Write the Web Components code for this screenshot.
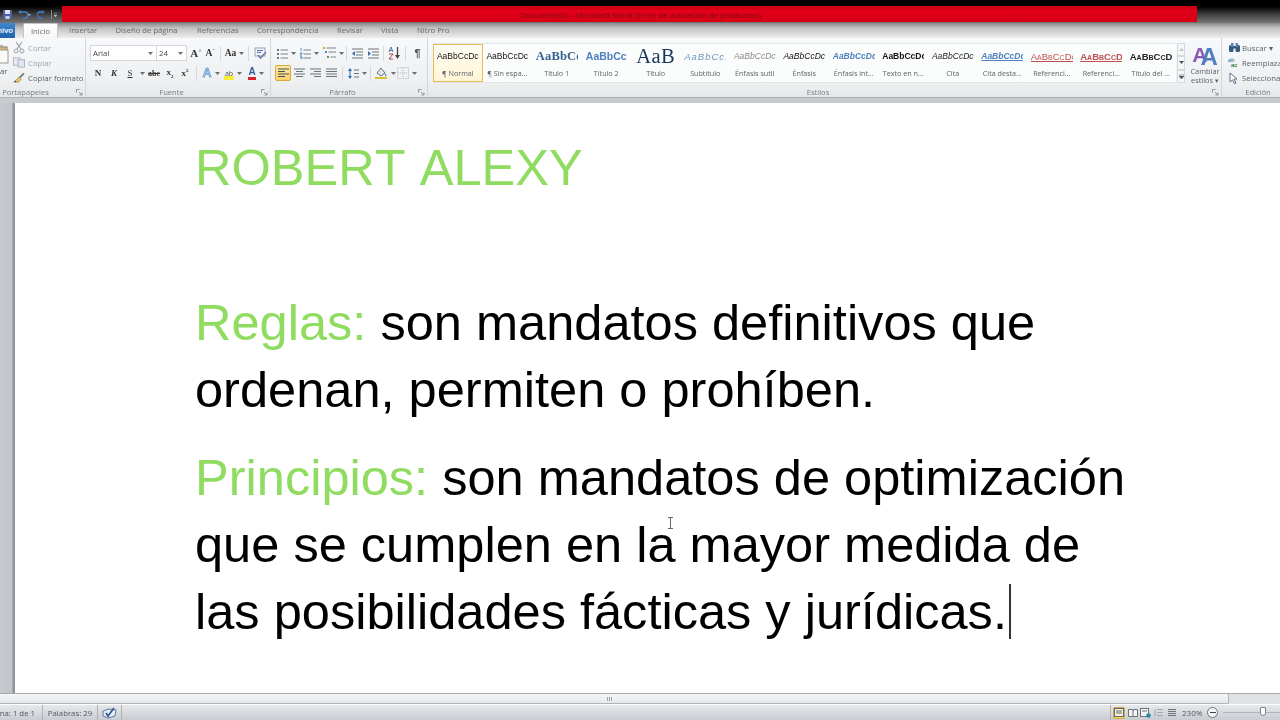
<!DOCTYPE html>
<html lang="es"><head><meta charset="utf-8"><title>Documento2 - Microsoft Word</title>
<style>
html,body{margin:0;height:720px;overflow:hidden;background:#fff}
body{font-family:"Open Sans","Liberation Sans",sans-serif}
word-app{display:flex;flex-direction:column;width:1280px;height:720px;overflow:hidden}
</style></head><body>
<word-app>
  <word-titlebar>Documento2 - Microsoft Word (Error de activación de productos)</word-titlebar>
  <word-tabs></word-tabs>
  <word-ribbon></word-ribbon>
  <word-doc>
    <doc-para gap="88">
      <doc-term>ROBERT ALEXY</doc-term>
    </doc-para>
    <doc-para gap="21"><doc-term>Reglas:</doc-term> son mandatos definitivos que<br>ordenan, permiten o prohíben.</doc-para>
    <doc-para gap="0"><doc-term>Principios:</doc-term> son mandatos de optimización<br>que se cumplen en la mayor medida de<br>las posibilidades fácticas y jurídicas.<doc-caret></doc-caret></doc-para>
  </word-doc>
  <word-hscroll></word-hscroll>
  <word-status></word-status>
</word-app>
<script>
const S=(w,h,b)=>`<svg xmlns="http://www.w3.org/2000/svg" width="${w}" height="${h}" viewBox="0 0 ${w} ${h}" fill="none">${b}</svg>`;
const lines=(ys,x1,x2,c='#5f6770')=>ys.map(y=>`<path d="M${x1} ${y}H${x2}" stroke="${c}"/>`).join('');
const ICONS={
 arrow:S(5,3,'<path d="M0 0h5L2.500 3z" fill="#6a7077"/>'),
 cut:S(12,13,'<path d="M3 1l5 7M9 1L4 8" stroke="#9ca2a8" stroke-width="1.200"/><circle cx="3" cy="10" r="2" stroke="#9ca2a8"/><circle cx="9" cy="10" r="2" stroke="#9ca2a8"/>'),
 copy:S(13,11,'<rect x=".5" y=".5" width="7" height="8" fill="#e8eaed" stroke="#aeb4ba"/><rect x="5.500" y="2.500" width="7" height="8" fill="#dfe8f2" stroke="#a8b4c0"/>'),
 brush:S(14,13,'<path d="M7 6l5-5 1.500 1.500-5 5z" fill="#777"/><path d="M2 11l5-5 2.500 2.500-3 3.500H3z" fill="#e8c860" stroke="#86713a" stroke-width=".6"/><path d="M0 12l3-2 1 2z" fill="#555"/>'),
 paste:S(9,20,'<rect x="-6" y="3" width="13" height="15" fill="#d9b877" stroke="#9c7d45"/><rect x="-3" y="6" width="11" height="13" fill="#fbfbf6" stroke="#999"/><rect x="-3" y="1" width="6" height="3" fill="#aaa"/>'),
 spell:S(13,13,'<rect x="1" y="1" width="10" height="8" fill="#f3f5f8" stroke="#9aa3ad"/><path d="M3 3.500h6M3 5.500h4" stroke="#4a76b5"/><path d="M4 8l2.500 3L12 5" stroke="#6a7fb0" stroke-width="1.500"/>'),
 bullets:S(11,11,'<rect x="0" y="1" width="2" height="2" fill="#6b7780"/><rect x="0" y="5" width="2" height="2" fill="#6b7780"/><rect x="0" y="9" width="2" height="2" fill="#6b7780"/>'+lines([2,6,10],3.5,11,'#7a838c')),
 numbers:S(11,11,'<path d="M1 0v3M0 5h2v1H0v2h2M0 9h2v2H0" stroke="#3d79bb" stroke-width=".8"/>'+lines([2,6,10],3.5,11,'#7a838c')),
 multi:S(13,12,'<rect x="0" y="0" width="2" height="2" fill="#e0a030"/><rect x="2" y="4" width="2" height="2" fill="#4a86c5"/><rect x="4" y="9" width="2" height="2" fill="#5a9a50"/><path d="M3.500 1H13M5.500 5H13M7.500 10H13" stroke="#7a838c"/>'),
 dedent:S(12,11,lines([1,10],1,12,'#6b737b')+lines([4,7],5,12,'#6b737b')+'<path d="M4 3v5L1 5.500z" fill="#3d6fae"/>'),
 indent:S(12,11,lines([1,10],1,12,'#6b737b')+lines([4,7],5,12,'#6b737b')+'<path d="M1 3v5l3-2.500z" fill="#3d6fae"/>'),
 sort:S(13,14,'<path d="M9.500 1v10" stroke="#444" stroke-width="1.300"/><path d="M7 9l2.500 4L12 9z" fill="#444"/><path d="M1 6l2-5 2 5M1.500 4.500h3" stroke="#3d6fae" stroke-width=".9"/><path d="M1 8h4l-4 5h4" stroke="#b03030" stroke-width=".9"/>'),
 aleft:S(13,10,'<path d="M1 1h11M1 3.500h7M1 6h11M1 8.500h7" stroke="#4b4f55"/>'),
 acenter:S(13,10,'<path d="M1 1h11M3 3.500h7M1 6h11M3 8.500h7" stroke="#6b737b"/>'),
 aright:S(13,10,'<path d="M1 1h11M5 3.500h7M1 6h11M5 8.500h7" stroke="#6b737b"/>'),
 ajust:S(13,10,'<path d="M1 1h11M1 3.500h11M1 6h11M1 8.500h11" stroke="#6b737b"/>'),
 spacing:S(12,13,'<path d="M3 3v7" stroke="#2f6cb3"/><path d="M1 4l2-3 2 3zM1 9l2 3 2-3z" fill="#2f6cb3"/><path d="M7 3h5M7 6.500h5M7 10h5" stroke="#6b737b"/>'),
 shade:S(14,14,'<path d="M3 7l4-5 4 5-4 3z" fill="#dfe6ee" stroke="#6a7480"/><path d="M11 7l1.500 2.500-1.500 1z" fill="#3d79bb"/><path d="M1 12h12" stroke="#d9c030" stroke-width="2"/>'),
 borders:S(12,12,'<rect x=".5" y=".5" width="11" height="11" stroke="#b5bbc2" stroke-dasharray="1 1"/><path d="M6 1v10M1 6h10" stroke="#b5bbc2" stroke-dasharray="1 1"/>'),
 launcher:S(7,7,'<path d="M.5 .5h3M.5 .5v3" stroke="#8d949b"/><path d="M3 3l3 3M6 3.500V6H3.500" stroke="#8d949b"/>'),
 find:S(13,11,'<rect x="1" y="3" width="4.500" height="7" rx="1.500" fill="#36597f"/><rect x="7.500" y="3" width="4.500" height="7" rx="1.500" fill="#36597f"/><rect x="3" y="1" width="2.500" height="4" fill="#5f86ad"/><rect x="7.500" y="1" width="2.500" height="4" fill="#5f86ad"/><rect x="5" y="4" width="3" height="2.500" fill="#36597f"/>'),
 cursor:S(11,12,'<path d="M2 1l7 6H6l2 4-1.500.8-2-4L2 10z" fill="#fff" stroke="#5c6f88"/>'),
 proof:S(16,12,'<path d="M1 4l6-2 7 1-1 6-7 2-5-2z" fill="#e7edf6" stroke="#5f76a5"/><path d="M4 6l2 3 6-8" stroke="#34558f" stroke-width="1.700"/>'),
 vprint:S(10,9,'<rect x=".5" y=".5" width="9" height="8" fill="#f6f2dc" stroke="#5e666e"/><path d="M2 3h6M2 5h6" stroke="#5e666e"/>'),
 vread:S(10,9,'<path d="M.5 1.500h4l.5 1 .5-1h4v7h-9z" stroke="#6b737b" fill="#f1f3f6"/><path d="M5 2v6" stroke="#6b737b"/>'),
 vweb:S(11,10,'<rect x=".5" y=".5" width="8" height="8" fill="#f1f3f6" stroke="#6b737b"/><path d="M2 3h5" stroke="#6b737b"/><circle cx="8.500" cy="7.500" r="2.200" fill="#3086a8"/>'),
 vout:S(10,9,'<path d="M3 1.500h6M3 4.500h6M3 7.500h6" stroke="#a0a6ad"/><path d="M1 1v7" stroke="#a0a6ad"/>'),
 vdraft:S(10,9,'<path d="M1 1.500h8M1 3.500h8M1 5.500h8M1 7.500h8" stroke="#6b737b"/>'),
 ibeam:S(7,12,'<path d="M1 .5h5M1 11.500h5M3.500 1v10" stroke="#666"/>')
};
class Base extends HTMLElement{
  html(s){(this.shadowRoot||this.attachShadow({mode:'open'})).innerHTML=s}
}
const def=(n,c)=>customElements.define(n,c);

def('tool-icon',class extends Base{connectedCallback(){this.html(`<style>:host{display:inline-flex;align-items:center;justify-content:center;line-height:0}</style>${ICONS[this.getAttribute('name')]||''}`)}});

def('tool-btn',class extends Base{connectedCallback(){
  const w=this.getAttribute('w')||16,act=this.hasAttribute('active');
  this.html(`<style>:host{display:inline-flex;align-items:center;justify-content:center;box-sizing:border-box;height:16px;width:${w}px;flex:none;gap:3px;${act?'background:linear-gradient(#fde9a8,#fbd268);border:1px solid #d9a93a;border-radius:2px;':''}}</style><slot></slot>`)}});

def('tool-sep',class extends Base{connectedCallback(){
  const w=this.getAttribute('w')||6;
  this.html(`<style>:host{display:block;flex:none;width:${w}px;height:15px;position:relative}i{display:block;width:1px;height:15px;margin:auto;background:#d5d8dc}</style><i></i>`)}});

def('ribbon-group',class extends Base{connectedCallback(){
  const w=this.getAttribute('w'),nl=this.hasAttribute('nolaunch');
  const pl=this.getAttribute('pl')||0,pr=this.getAttribute('pr')||0;
  this.html(`<style>
  :host{display:flex;flex-direction:column;flex:none;box-sizing:border-box;width:${w}px;height:59px;border-right:1px solid #d3d6da}
  .c{flex:1;min-height:0;overflow:hidden}
  .l{height:10px;box-sizing:border-box;padding:0 ${pr}px 0 ${pl}px;display:flex;align-items:center;justify-content:center;position:relative;font-size:7.600px;color:#777b81;line-height:10px;flex:none}
  tool-icon{position:absolute;right:2px;top:2px}
  </style><div class="c"><slot></slot></div><div class="l">${this.getAttribute('label')}${nl?'':'<tool-icon name="launcher"></tool-icon>'}</div>`)}});

def('style-tile',class extends Base{connectedCallback(){
  const act=this.hasAttribute('active');
  this.html(`<style>
  :host{display:flex;flex-direction:column;align-items:center;flex:none;box-sizing:border-box;width:49.500px;height:38px;overflow:hidden;${act?'border:1.500px solid #e8bd55;background:linear-gradient(#fffdf3,#fff6d8);':'border:1.500px solid transparent;'}}
  .p{height:23px;width:42px;overflow:hidden;white-space:nowrap;display:flex;align-items:center;justify-content:safe center;${this.getAttribute('pstyle')||''};line-height:23px}
  .n{font-size:7.200px;color:#5e6268;white-space:nowrap;line-height:10px}
  </style><div class="p">${this.getAttribute('preview')||'AaBbCcDc'}</div><div class="n">${this.getAttribute('name')}</div>`)}});

def('word-titlebar',class extends Base{connectedCallback(){
  this.html(`<style>
  :host{display:flex;flex:none;height:23px;box-sizing:border-box;padding:6px 83px 1px 0;background:linear-gradient(#000 0,#000 28%,#3e3e3e 62%,#777 100%);font-family:"Open Sans","Liberation Sans",sans-serif}
  .q{width:62px;flex:none;display:flex;align-items:center;gap:6px;padding-left:3px;box-sizing:border-box;height:17px;filter:blur(.4px)}
  .r{flex:1;background:linear-gradient(#c8000f,#e3001a 30%,#d80014);display:flex;align-items:center;justify-content:center;color:#7f0c12;font-size:8px;padding-left:21px;white-space:nowrap}
  </style><div class="q">
  <svg width="9" height="9" viewBox="0 0 9 9"><rect width="9" height="9" fill="#4c5fa8"/><rect x="2" width="5" height="4" fill="#dfe5f2"/><rect x="2.500" y="6" width="4" height="3" fill="#c8cfdd"/></svg>
  <svg width="13" height="9" viewBox="0 0 13 9" fill="none"><path d="M2 2h5a3 3 0 0 1 0 6H5" stroke="#4b7dc0" stroke-width="1.600"/><path d="M0 2l3-2v4z" fill="#4b7dc0"/><path d="M10 4h3l-1.500 2z" fill="#bbb"/></svg>
  <svg width="8" height="9" viewBox="0 0 8 9" fill="none"><path d="M6 2H3a2.500 2.500 0 0 0 0 6h2" stroke="#3f72b8" stroke-width="1.800"/><path d="M8 2L5 0v4z" fill="#3f72b8"/></svg>
  <svg width="6" height="9" viewBox="0 0 6 9"><path d="M.5 0v9" stroke="#8b8b8b"/><path d="M3 3h3M3 5h3l-1.500 2z" fill="#bbb" stroke="#bbb" stroke-width=".5"/></svg>
  </div><div class="r"><slot></slot></div>`)}});

def('word-tabs',class extends Base{connectedCallback(){
  const t=[['Insertar',69],['Diseño de página',115],['Referencias',197],['Correspondencia',257],['Revisar',337],['Vista',381],['Nitro Pro',417]];
  let gaps='',x=58;
  const widths=[28,63,41,60,24,17,31];
  t.forEach((a,i)=>{gaps+=`<span style="margin-left:${a[1]-x}px;width:${widths[i]}px">${a[0]}</span>`;x=a[1]+widths[i]});
  this.html(`<style>
  :host{display:flex;flex:none;height:15px;background:linear-gradient(#8a8a8a,#c4c4c4 35%,#eceded 100%);font-size:7.700px;color:#656b71;line-height:15px;position:relative;filter:blur(.3px)}
  .f{margin-left:-16px;width:31px;flex:none;box-sizing:border-box;background:linear-gradient(#3f86d0,#2160ae);color:#fff;text-align:right;padding-right:2px;overflow:hidden;font-weight:600;white-space:nowrap}
  .a{margin-left:8px;width:35px;flex:none;text-align:center;background:linear-gradient(#fff,#f6f7f8);border:1px solid #c3c7cc;border-bottom:none;box-sizing:border-box;height:16px;border-radius:2px 2px 0 0;position:relative;z-index:1;line-height:14px}
  span{display:inline-block;flex:none;text-align:center;white-space:nowrap}
  </style><div class="f">Archivo</div><div class="a">Inicio</div>${gaps}`)}});

const btn=(ic,w,arrow,attr='')=>`<tool-btn w="${w}" ${attr}><tool-icon name="${ic}"></tool-icon>${arrow?'<tool-icon name="arrow"></tool-icon>':''}</tool-btn>`;
const txt=(t,w,st,arrow)=>`<tool-btn w="${w}"><span style="${st}">${t}</span>${arrow?'<tool-icon name="arrow"></tool-icon>':''}</tool-btn>`;
const ser='font-family:Liberation Serif,serif;font-weight:700;color:#333;';

def('word-ribbon',class extends Base{connectedCallback(){
  const tiles=[
   ['¶ Normal','font:8.500px Liberation Sans,sans-serif;color:#111','AaBbCcDc','active'],
   ['¶ Sin espa...','font:8.500px Liberation Sans,sans-serif;color:#111'],
   ['Título 1','font:700 12.500px Liberation Serif,serif;color:#365f91;letter-spacing:.2px','AaBbCc'],
   ['Título 2','font:700 10.500px Liberation Sans,sans-serif;color:#4f81bd','AaBbCc'],
   ['Título','font:20.500px Liberation Serif,serif;color:#17365d;letter-spacing:.5px','AaB'],
   ['Subtítulo','font:italic 9.500px Liberation Sans,sans-serif;color:#6f94c4;letter-spacing:1px','AaBbCc.'],
   ['Énfasis sutil','font:italic 8.500px Liberation Sans,sans-serif;color:#8a8a8a'],
   ['Énfasis','font:italic 8.500px Liberation Sans,sans-serif;color:#111'],
   ['Énfasis int...','font:italic 700 8.500px Liberation Sans,sans-serif;color:#4f81bd'],
   ['Texto en n...','font:700 8.500px Liberation Sans,sans-serif;color:#111'],
   ['Cita','font:italic 8.500px Liberation Sans,sans-serif;color:#222'],
   ['Cita desta...','font:italic 700 8.500px Liberation Sans,sans-serif;color:#4f81bd;text-decoration:underline'],
   ['Referenci...','font:small-caps 9.500px Liberation Sans,sans-serif;color:#c0504d;text-decoration:underline','AaBbCcDc'],
   ['Referenci...','font:small-caps 700 9.500px Liberation Sans,sans-serif;color:#c0504d;text-decoration:underline','AaBbCcDe'],
   ['Título del ...','font:small-caps 700 9.500px Liberation Sans,sans-serif;color:#222','AaBbCcDc']
  ].map(t=>`<style-tile name="${t[0]}" pstyle="${t[1]}" ${t[2]?`preview="${t[2]}"`:''} ${t[3]||''}></style-tile>`).join('');
  this.html(`<style>
  :host{display:flex;flex:none;height:60px;box-sizing:border-box;background:linear-gradient(#f8f9fa,#eef0f2 70%,#e6e8ea);border-bottom:1px solid #aeb2b7;filter:blur(.4px);font-size:8px;color:#5e6268;overflow:hidden}
  .row{display:flex;align-items:center;height:20px}
  .combo{box-sizing:border-box;height:16px;background:#fff;border:1px solid #d4d8dc;display:flex;align-items:center;justify-content:space-between;padding:0 3px 0 2px;font-size:7.800px;color:#444;flex:none}
  .clip{display:flex;height:47px}
  .cl{display:flex;align-items:center;gap:3px;height:15px;white-space:nowrap;font-size:7.800px}
  .dim{color:#a0a4a9}
  .paste{width:13px;flex:none;padding-top:6px;font-size:7.800px;color:#555;line-height:10px}
  .gal{display:flex;align-items:flex-start;margin:5px 0 0 5px}
  .tiles{display:flex;width:743px;height:40px;background:#fbfcfc;border:1px solid #e3e5e8;border-width:1px 0;box-sizing:border-box;overflow:hidden;flex:none}
  .sb{display:flex;flex-direction:column;width:8px;flex:none;height:40px;margin-left:1px}
  .sb i{flex:1;border:1px solid #d5d8dc;display:flex;align-items:center;justify-content:center;background:#f5f6f7;box-sizing:border-box}
  .ch{width:38px;flex:none;margin-left:1px;display:flex;flex-direction:column;align-items:center;font-size:7.400px;line-height:9px;text-align:center;color:#5e6268;white-space:nowrap}
  .aa{height:24px;font:700 24px/24px "Liberation Sans",sans-serif;white-space:nowrap;overflow:hidden}
  .aa b{letter-spacing:-7px;color:#8a5bb0;font-size:21px;vertical-align:3px}
  .aa i{font-style:normal;color:#4f7fc0}
  .ed div{display:flex;align-items:center;gap:0;height:15px;white-space:nowrap;font-size:7.800px;padding-left:6px}
  .ed tool-icon,.rp{width:14px;flex:none;justify-content:flex-start}
  .rp{display:block;font:6px/5px "Liberation Sans",sans-serif;color:#2f6d9e}
  .rp b{color:#2d7f3a;display:block;padding-left:3px}
  </style>
  <ribbon-group w="86" label="Portapapeles" pr="34">
   <div class="clip">
    <div class="paste"><tool-icon name="paste"></tool-icon><br>ar</div>
    <div style="padding-top:2px">
     <div class="cl dim"><tool-icon name="cut" style="width:12px"></tool-icon>Cortar</div>
     <div class="cl dim"><tool-icon name="copy" style="width:12px"></tool-icon>Copiar</div>
     <div class="cl"><tool-icon name="brush" style="width:12px"></tool-icon>Copiar formato</div>
    </div>
   </div>
  </ribbon-group>
  <ribbon-group w="185" label="Fuente" pr="13">
   <div style="padding:5px 0 0 4px">
    <div class="row">
     <div class="combo" style="width:67px"><span>Arial</span><tool-icon name="arrow"></tool-icon></div>
     <div class="combo" style="width:30px;border-left:none"><span>24</span><tool-icon name="arrow"></tool-icon></div>
     <span style="width:2px"></span>
     ${txt('A<span style="font-size:6px;color:#3470b5;vertical-align:4px">^</span>',14,ser+'font-size:11px')}
     ${txt('A<span style="font-size:6px;color:#3470b5;vertical-align:3px">ˇ</span>',14,ser+'font-size:9.500px')}
     <tool-sep w="6"></tool-sep>
     ${txt('Aa',23,ser+'font-size:9.500px',1)}
     <tool-sep w="4"></tool-sep>
     ${btn('spell',20)}
    </div>
    <div class="row">
     ${txt('N',16,ser+'font-size:9px')}
     ${txt('K',16,ser+'font-size:9px;font-style:italic')}
     ${txt('S',16,ser+'font-size:9px;text-decoration:underline;font-weight:400')}
     <tool-btn w="8"><tool-icon name="arrow"></tool-icon></tool-btn>
     ${txt('abc',16,ser+'font-size:8px;text-decoration:line-through')}
     ${txt('x<sub style="font-size:5px">2</sub>',16,ser+'font-size:9px')}
     ${txt('x<sup style="font-size:5px">2</sup>',14,ser+'font-size:9px')}
     <tool-sep w="8"></tool-sep>
     ${txt('A',22,'font:700 12.500px Liberation Sans,sans-serif;color:#a9c9ec;-webkit-text-stroke:.5px #4c86c6',1)}
     ${txt('<span style="background:linear-gradient(transparent 70%,#f5ee3c 70%);color:#555;font-size:7px;padding:0 1px;line-height:12px;display:inline-block">ab</span>',22,'',1)}
     ${txt('<span style="border-bottom:3px solid #d8232a;color:#2f5f9e;font-weight:700;font-size:10px;line-height:10px;display:inline-block">A</span>',24,'font-family:Liberation Sans,sans-serif',1)}
    </div>
   </div>
  </ribbon-group>
  <ribbon-group w="157" label="Párrafo" pr="13">
   <div style="padding:5px 0 0 4px">
    <div class="row">
     ${btn('bullets',22,1)}${btn('numbers',24,1)}${btn('multi',24,1)}
     <tool-sep w="3"></tool-sep>
     ${btn('dedent',17)}${btn('indent',15)}
     <tool-sep w="6"></tool-sep>
     ${btn('sort',16)}
     <tool-sep w="7"></tool-sep>
     ${txt('¶',17,'font:700 11px Liberation Sans,sans-serif;color:#4a4f55')}
    </div>
    <div class="row">
     ${btn('aleft',16,0,'active')}${btn('acenter',16)}${btn('aright',16)}${btn('ajust',16)}
     <tool-sep w="7"></tool-sep>
     ${btn('spacing',22,1)}
     <tool-sep w="5"></tool-sep>
     ${btn('shade',23,1)}${btn('borders',22,1)}
    </div>
   </div>
  </ribbon-group>
  <ribbon-group w="794" label="Estilos" pr="13">
   <div class="gal">
    <div class="tiles">${tiles}</div>
    <div class="sb"><i><svg width="5" height="3"><path d="M0 3h5L2.500 0z" fill="#c2c6cb"/></svg></i><i><svg width="5" height="3"><path d="M0 0h5L2.500 3z" fill="#50565d"/></svg></i><i><svg width="5" height="5"><path d="M0 0h5M0 2h5l-2.500 3z" stroke="#50565d" stroke-width=".6" fill="#50565d"/></svg></i></div>
    <div class="ch"><div class="aa"><b>A</b><i>A</i></div><span>Cambiar</span><span>estilos ▾</span></div>
   </div>
  </ribbon-group>
  <ribbon-group w="58" label="Edición" nolaunch pl="14" style="border-right:none">
   <div class="ed" style="padding-top:2px">
    <div><tool-icon name="find"></tool-icon>Buscar ▾</div>
    <div><span class="rp">ab<b>ac</b></span>Reemplazar</div>
    <div><tool-icon name="cursor"></tool-icon>Seleccionar</div>
   </div>
  </ribbon-group>`)}});

def('word-doc',class extends Base{connectedCallback(){
  this.html(`<style>
  :host{display:flex;flex:1;min-height:0;box-sizing:border-box;border-top:5px solid #c6cbd0;background:#fff;position:relative}
  .g{width:15px;flex:none;background:linear-gradient(90deg,#c6cbd0 0,#c0c5ca 80%,#8e9398 87%,#8e9398 100%)}
  .p{flex:1;padding:31px 0 0 180px;min-width:0}
  tool-icon{position:absolute;left:667px;top:414px}
  </style><div class="g"></div><div class="p"><slot></slot></div><tool-icon name="ibeam"></tool-icon>`)}});

def('doc-para',class extends Base{connectedCallback(){
  this.html(`<style>:host{display:block;font:50.550px/67px "Liberation Sans",Arial,sans-serif;font-kerning:none;color:#000;margin-bottom:${this.getAttribute('gap')||0}px;white-space:nowrap}</style><slot></slot>`)}});
def('doc-term',class extends Base{connectedCallback(){this.html(`<style>:host{color:#8fdc60}</style><slot></slot>`)}});
def('doc-caret',class extends Base{connectedCallback(){this.html(`<style>:host{display:inline-block;width:2px;height:55px;background:#333;vertical-align:-10px;margin-left:2px}</style>`)}});

def('word-hscroll',class extends Base{connectedCallback(){
  this.html(`<style>
  :host{display:flex;flex:none;height:11px;box-sizing:border-box;background:#dfe2e5;border-top:1px solid #a5a9ae}
  .t{width:1229px;flex:none;box-sizing:border-box;background:linear-gradient(#f4f6f8,#e6e9ec);border:1px solid #b0b4b9;border-width:0 1px 1px 0;border-radius:0 2px 2px 0;display:flex;align-items:center;justify-content:center;padding-right:10px}
  i{width:5px;height:4px;background:repeating-linear-gradient(90deg,#9da2a8 0 1px,transparent 1px 2px)}
  </style><div class="t"><i></i></div>`)}});

def('word-status',class extends Base{connectedCallback(){
  this.html(`<style>
  :host{display:flex;flex:none;height:16px;box-sizing:border-box;background:linear-gradient(#e6e8ea,#c9cdd2);border-top:1px solid #fff;font-size:7.800px;color:#53585e;filter:blur(.3px);align-items:center;white-space:nowrap;overflow:hidden}
  .c{height:100%;display:flex;align-items:center;box-sizing:border-box;border-right:1px solid #aeb2b7;flex:none}
  .sp{flex:1}
  .v{width:11px;display:flex;justify-content:center;flex:none}
  .on{width:12px;height:12px;background:#fbd877;border:1px solid #d9a93a;border-radius:2px;display:flex;align-items:center;justify-content:center;box-sizing:border-box;flex:none}
  .m{width:11px;height:11px;border-radius:50%;border:1px solid #6f757c;box-sizing:border-box;display:flex;align-items:center;justify-content:center;background:#f2f3f5;flex:none}
  .m:after{content:"";width:6px;height:1px;background:#444}
  .sl{width:70px;height:1px;background:#b0b4b9;margin-left:3px;position:relative;flex:none}
  .sl b{position:absolute;left:37px;top:-5px;width:6px;height:9px;background:#fff;border:1px solid #7d838a;border-radius:1px 1px 3px 3px;box-sizing:border-box}
  </style>
  <div class="c" style="width:43px;justify-content:flex-end;padding-right:7px"><span style="margin-left:-30px">Página: 1 de 1</span></div>
  <div class="c" style="width:55px;justify-content:center">Palabras: 29</div>
  <div class="c" style="width:24px;justify-content:center"><tool-icon name="proof"></tool-icon></div>
  <div class="sp"></div>
  <div class="c" style="border-left:1px solid #aeb2b7;border-right:none;padding-left:2px;width:170px;overflow:hidden;gap:2px">
   <div class="on"><tool-icon name="vprint"></tool-icon></div>
   <div class="v"><tool-icon name="vread"></tool-icon></div>
   <div class="v"><tool-icon name="vweb"></tool-icon></div>
   <div class="v"><tool-icon name="vout"></tool-icon></div>
   <div class="v"><tool-icon name="vdraft"></tool-icon></div>
   <span style="margin:0 3px 0 3px;font-size:8px;width:20px;flex:none">230%</span>
   <div class="m"></div>
   <div class="sl"><b></b></div>
  </div>`)}});
</script>
</body></html>
